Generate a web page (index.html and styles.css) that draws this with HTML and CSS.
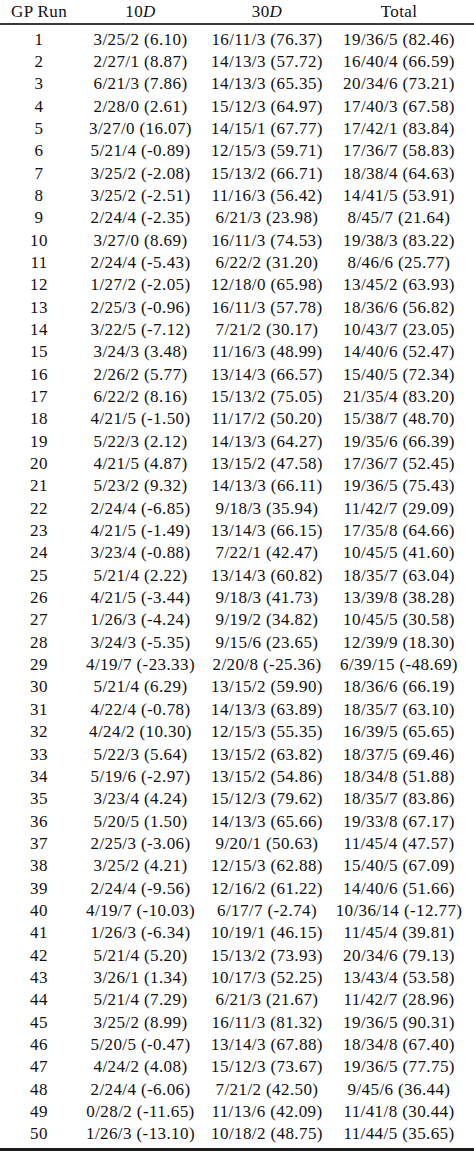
FILE: index.html
```html
<!DOCTYPE html>
<html>
<head>
<meta charset="utf-8">
<link rel="stylesheet" href="styles.css">
</head>
<body>
<table class="results">
  <colgroup>
    <col class="c-run">
    <col class="c-10">
    <col class="c-30">
    <col class="c-total">
  </colgroup>
  <thead>
    <tr><th>GP Run</th><th>10<i>D</i></th><th>30<i>D</i></th><th class="last">Total</th></tr>
  </thead>
  <tbody>
    <tr><td>1</td><td>3/25/2 (6.10)</td><td>16/11/3 (76.37)</td><td class="last">19/36/5 (82.46)</td></tr>
    <tr><td>2</td><td>2/27/1 (8.87)</td><td>14/13/3 (57.72)</td><td class="last">16/40/4 (66.59)</td></tr>
    <tr><td>3</td><td>6/21/3 (7.86)</td><td>14/13/3 (65.35)</td><td class="last">20/34/6 (73.21)</td></tr>
    <tr><td>4</td><td>2/28/0 (2.61)</td><td>15/12/3 (64.97)</td><td class="last">17/40/3 (67.58)</td></tr>
    <tr><td>5</td><td>3/27/0 (16.07)</td><td>14/15/1 (67.77)</td><td class="last">17/42/1 (83.84)</td></tr>
    <tr><td>6</td><td>5/21/4 (-0.89)</td><td>12/15/3 (59.71)</td><td class="last">17/36/7 (58.83)</td></tr>
    <tr><td>7</td><td>3/25/2 (-2.08)</td><td>15/13/2 (66.71)</td><td class="last">18/38/4 (64.63)</td></tr>
    <tr><td>8</td><td>3/25/2 (-2.51)</td><td>11/16/3 (56.42)</td><td class="last">14/41/5 (53.91)</td></tr>
    <tr><td>9</td><td>2/24/4 (-2.35)</td><td>6/21/3 (23.98)</td><td class="last">8/45/7 (21.64)</td></tr>
    <tr><td>10</td><td>3/27/0 (8.69)</td><td>16/11/3 (74.53)</td><td class="last">19/38/3 (83.22)</td></tr>
    <tr><td>11</td><td>2/24/4 (-5.43)</td><td>6/22/2 (31.20)</td><td class="last">8/46/6 (25.77)</td></tr>
    <tr><td>12</td><td>1/27/2 (-2.05)</td><td>12/18/0 (65.98)</td><td class="last">13/45/2 (63.93)</td></tr>
    <tr><td>13</td><td>2/25/3 (-0.96)</td><td>16/11/3 (57.78)</td><td class="last">18/36/6 (56.82)</td></tr>
    <tr><td>14</td><td>3/22/5 (-7.12)</td><td>7/21/2 (30.17)</td><td class="last">10/43/7 (23.05)</td></tr>
    <tr><td>15</td><td>3/24/3 (3.48)</td><td>11/16/3 (48.99)</td><td class="last">14/40/6 (52.47)</td></tr>
    <tr><td>16</td><td>2/26/2 (5.77)</td><td>13/14/3 (66.57)</td><td class="last">15/40/5 (72.34)</td></tr>
    <tr><td>17</td><td>6/22/2 (8.16)</td><td>15/13/2 (75.05)</td><td class="last">21/35/4 (83.20)</td></tr>
    <tr><td>18</td><td>4/21/5 (-1.50)</td><td>11/17/2 (50.20)</td><td class="last">15/38/7 (48.70)</td></tr>
    <tr><td>19</td><td>5/22/3 (2.12)</td><td>14/13/3 (64.27)</td><td class="last">19/35/6 (66.39)</td></tr>
    <tr><td>20</td><td>4/21/5 (4.87)</td><td>13/15/2 (47.58)</td><td class="last">17/36/7 (52.45)</td></tr>
    <tr><td>21</td><td>5/23/2 (9.32)</td><td>14/13/3 (66.11)</td><td class="last">19/36/5 (75.43)</td></tr>
    <tr><td>22</td><td>2/24/4 (-6.85)</td><td>9/18/3 (35.94)</td><td class="last">11/42/7 (29.09)</td></tr>
    <tr><td>23</td><td>4/21/5 (-1.49)</td><td>13/14/3 (66.15)</td><td class="last">17/35/8 (64.66)</td></tr>
    <tr><td>24</td><td>3/23/4 (-0.88)</td><td>7/22/1 (42.47)</td><td class="last">10/45/5 (41.60)</td></tr>
    <tr><td>25</td><td>5/21/4 (2.22)</td><td>13/14/3 (60.82)</td><td class="last">18/35/7 (63.04)</td></tr>
    <tr><td>26</td><td>4/21/5 (-3.44)</td><td>9/18/3 (41.73)</td><td class="last">13/39/8 (38.28)</td></tr>
    <tr><td>27</td><td>1/26/3 (-4.24)</td><td>9/19/2 (34.82)</td><td class="last">10/45/5 (30.58)</td></tr>
    <tr><td>28</td><td>3/24/3 (-5.35)</td><td>9/15/6 (23.65)</td><td class="last">12/39/9 (18.30)</td></tr>
    <tr><td>29</td><td>4/19/7 (-23.33)</td><td>2/20/8 (-25.36)</td><td class="last">6/39/15 (-48.69)</td></tr>
    <tr><td>30</td><td>5/21/4 (6.29)</td><td>13/15/2 (59.90)</td><td class="last">18/36/6 (66.19)</td></tr>
    <tr><td>31</td><td>4/22/4 (-0.78)</td><td>14/13/3 (63.89)</td><td class="last">18/35/7 (63.10)</td></tr>
    <tr><td>32</td><td>4/24/2 (10.30)</td><td>12/15/3 (55.35)</td><td class="last">16/39/5 (65.65)</td></tr>
    <tr><td>33</td><td>5/22/3 (5.64)</td><td>13/15/2 (63.82)</td><td class="last">18/37/5 (69.46)</td></tr>
    <tr><td>34</td><td>5/19/6 (-2.97)</td><td>13/15/2 (54.86)</td><td class="last">18/34/8 (51.88)</td></tr>
    <tr><td>35</td><td>3/23/4 (4.24)</td><td>15/12/3 (79.62)</td><td class="last">18/35/7 (83.86)</td></tr>
    <tr><td>36</td><td>5/20/5 (1.50)</td><td>14/13/3 (65.66)</td><td class="last">19/33/8 (67.17)</td></tr>
    <tr><td>37</td><td>2/25/3 (-3.06)</td><td>9/20/1 (50.63)</td><td class="last">11/45/4 (47.57)</td></tr>
    <tr><td>38</td><td>3/25/2 (4.21)</td><td>12/15/3 (62.88)</td><td class="last">15/40/5 (67.09)</td></tr>
    <tr><td>39</td><td>2/24/4 (-9.56)</td><td>12/16/2 (61.22)</td><td class="last">14/40/6 (51.66)</td></tr>
    <tr><td>40</td><td>4/19/7 (-10.03)</td><td>6/17/7 (-2.74)</td><td class="last">10/36/14 (-12.77)</td></tr>
    <tr><td>41</td><td>1/26/3 (-6.34)</td><td>10/19/1 (46.15)</td><td class="last">11/45/4 (39.81)</td></tr>
    <tr><td>42</td><td>5/21/4 (5.20)</td><td>15/13/2 (73.93)</td><td class="last">20/34/6 (79.13)</td></tr>
    <tr><td>43</td><td>3/26/1 (1.34)</td><td>10/17/3 (52.25)</td><td class="last">13/43/4 (53.58)</td></tr>
    <tr><td>44</td><td>5/21/4 (7.29)</td><td>6/21/3 (21.67)</td><td class="last">11/42/7 (28.96)</td></tr>
    <tr><td>45</td><td>3/25/2 (8.99)</td><td>16/11/3 (81.32)</td><td class="last">19/36/5 (90.31)</td></tr>
    <tr><td>46</td><td>5/20/5 (-0.47)</td><td>13/14/3 (67.88)</td><td class="last">18/34/8 (67.40)</td></tr>
    <tr><td>47</td><td>4/24/2 (4.08)</td><td>15/12/3 (73.67)</td><td class="last">19/36/5 (77.75)</td></tr>
    <tr><td>48</td><td>2/24/4 (-6.06)</td><td>7/21/2 (42.50)</td><td class="last">9/45/6 (36.44)</td></tr>
    <tr><td>49</td><td>0/28/2 (-11.65)</td><td>11/13/6 (42.09)</td><td class="last">11/41/8 (30.44)</td></tr>
    <tr><td>50</td><td>1/26/3 (-13.10)</td><td>10/18/2 (48.75)</td><td class="last">11/44/5 (35.65)</td></tr>
  </tbody>
</table>
</body>
</html>
```

FILE: styles.css
```css
html, body {
  margin: 0;
  padding: 0;
  background: #ffffff;
}

body {
  font-family: "Liberation Serif", "DejaVu Serif", serif;
  font-size: 17px;
  letter-spacing: 0.4px;
  color: #111111;
}

.results {
  width: 474px;
  border-collapse: collapse;
  table-layout: fixed;
}

.c-run { width: 78px; }
.c-10 { width: 125px; }
.c-30 { width: 128px; }
.c-total { width: 143px; }

.results th,
.results td {
  padding: 0;
  text-align: center;
  white-space: nowrap;
  font-weight: normal;
}

.results th.last,
.results td.last {
  padding-right: 7px;
}

.results thead th {
  height: 23px;
  line-height: 23px;
  border-bottom: 2.5px solid #3a3a3a;
}

.results tbody td {
  height: 22.35px;
  line-height: 22.35px;
}

.results tbody tr:first-child td {
  padding-top: 3.5px;
}

.results tbody tr:last-child td {
  padding-bottom: 2.5px;
  border-bottom: 3.5px solid #1c1c1c;
}
```
